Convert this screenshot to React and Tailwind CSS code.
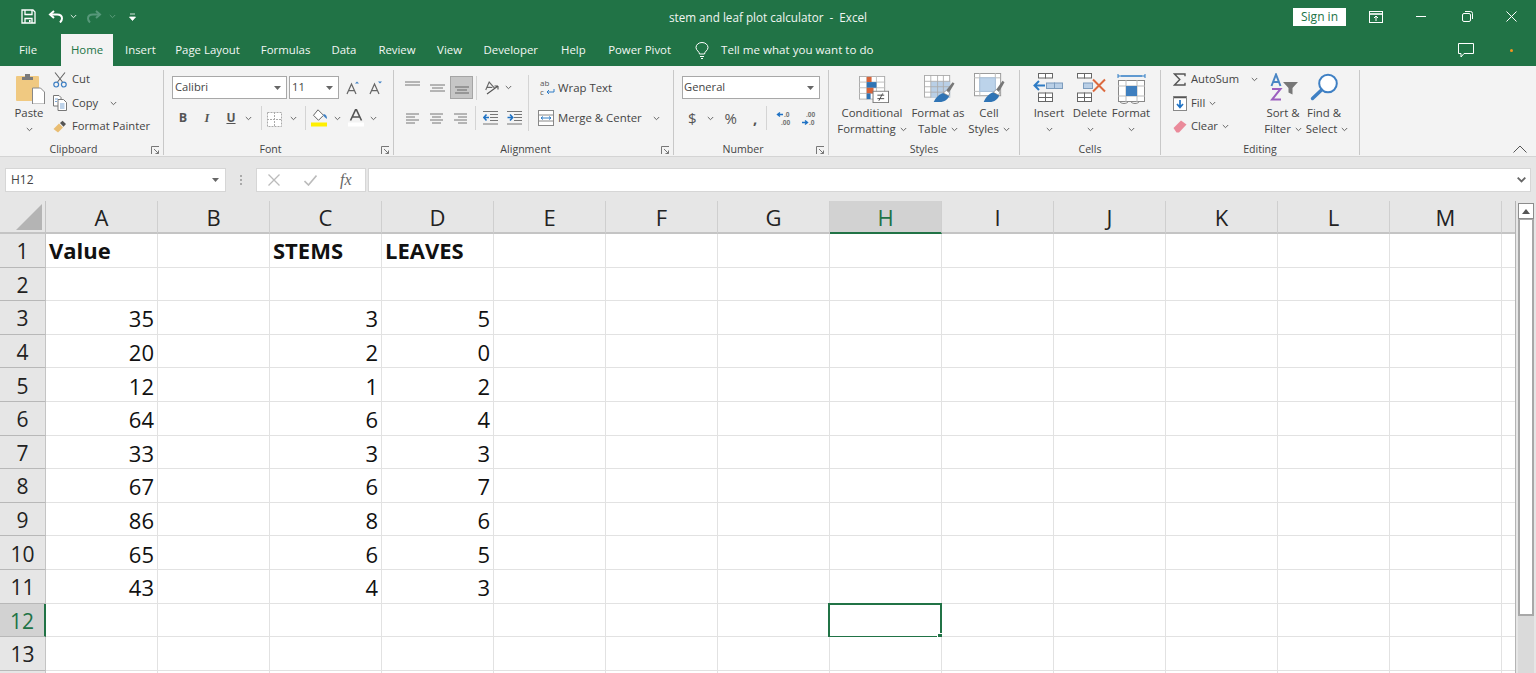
import React from 'react';

const UI = { fontFamily: '"Open Sans", sans-serif' };

const Chev = ({ c = '#666', className = '' }) => (
  <svg width="7" height="5" viewBox="0 0 7 5" className={`shrink-0 ${className}`}>
    <path d="M0.8 1 L3.5 3.7 L6.2 1" fill="none" stroke={c} strokeWidth="1" />
  </svg>
);
const Caret = () => (
  <svg width="7" height="4" viewBox="0 0 7 4" className="shrink-0"><path d="M0 0 H7 L3.5 4 Z" fill="#666" /></svg>
);
const Launcher = () => (
  <svg width="9" height="9" viewBox="0 0 9 9">
    <path d="M0.5 8 V0.5 H8" fill="none" stroke="#777" />
    <path d="M3 3 L7.5 7.5 M7.5 4.5 V7.5 H4.5" fill="none" stroke="#777" />
  </svg>
);
const VSep = ({ h = 'h-[24px]' }) => <div className={`w-px ${h} bg-[#d4d4d4] shrink-0`} />;

function Group({ w, label, launcher, children, border = true }) {
  return (
    <div style={{ width: w }} className={`shrink-0 h-[85px] flex flex-col ${border ? 'border-r border-[#c8c8c8]' : ''}`}>
      <div className="h-[72px] flex">{children}</div>
      <div className="grid grid-cols-[1fr_auto_1fr] items-center h-[13px] text-[10.6px] text-[#444]">
        <span />
        <span className={launcher ? 'mr-[16px]' : ''}>{label}</span>
        <span className="flex justify-end pr-[3px] pt-[1px]">{launcher && <Launcher />}</span>
      </div>
    </div>
  );
}

function BigBtn({ w, icon, lines, chev = 'own', ml = 0, shift = 0 }) {
  return (
    <div style={{ width: w, marginLeft: ml }} className="shrink-0 flex flex-col items-center text-[11.4px] leading-[16px] text-[#444]">
      <div className="h-[35px] flex items-start justify-center">{icon}</div>
      {lines.map((l, i) => {
        const last = i === lines.length - 1;
        return (
          <div key={i} style={last && shift ? { marginLeft: shift } : undefined} className="flex items-center gap-[4px] whitespace-nowrap h-[16px]">
            <span>{l}</span>
            {chev === 'inline' && last && <Chev />}
          </div>
        );
      })}
      {chev === 'own' && <div className="h-[16px] flex items-center"><Chev /></div>}
    </div>
  );
}

const SmallRow = ({ icon, text, gap = 6, iw = 19 }) => (
  <div className="h-[23.5px] flex items-center text-[11.2px] text-[#444] whitespace-nowrap">
    <span style={{ width: iw }} className="flex justify-center shrink-0">{icon}</span>
    <span style={{ marginLeft: gap }}>{text}</span>
  </div>
);

/* ---------- icons ---------- */
const SaveI = () => (
  <svg width="15" height="15" viewBox="0 0 15 15" fill="none" stroke="#fff" strokeWidth="1.3">
    <path d="M1 1 H12 L14 3 V14 H1 Z" />
    <path d="M4 1 V5.5 H11 V1" />
    <path d="M4 14 V9.5 H11 V14" />
    <rect x="8" y="11" width="1.6" height="2" fill="#fff" stroke="none" />
  </svg>
);
const UndoI = ({ c = '#fff' }) => (
  <svg width="15" height="13" viewBox="0 0 15 13" fill="none" stroke={c} strokeWidth="2">
    <path d="M6 1 L2 4.5 L6 8" />
    <path d="M2 4.5 H9 C12 4.5 14 6 14 8.5 C14 10.5 13 11.5 12 12.5" />
  </svg>
);
const ScissorsI = () => (
  <svg width="14" height="16" viewBox="0 0 14 16" fill="none">
    <path d="M2 0.5 L9.5 10 M12 0.5 L4.5 10" stroke="#666" strokeWidth="1.1" />
    <circle cx="3.2" cy="12.6" r="2.4" stroke="#3f80c4" strokeWidth="1.2" />
    <circle cx="10.8" cy="12.6" r="2.4" stroke="#3f80c4" strokeWidth="1.2" />
  </svg>
);
const CopyI = () => (
  <svg width="14" height="16" viewBox="0 0 14 16" fill="#fff" stroke="#777" strokeWidth="1">
    <path d="M0.5 0.5 H6 L8 2.5 V11 H0.5 Z" />
    <path d="M5 4.5 H10.5 L13.5 7.5 V15.5 H5 Z" />
    <path d="M2 4 H5 M2 6.5 H4 M7 9 H11.5 M7 11 H11.5 M7 13 H11.5" stroke="#5a8fc9" strokeWidth="0.8" />
  </svg>
);
const PainterI = () => (
  <svg width="14" height="13" viewBox="0 0 14 13">
    <path d="M0.5 9 L6 3.5 L10 7.5 L5 12.5 Z" fill="#e9bd72" />
    <path d="M7 3 L9.5 0.8 L13 4 L10.5 6.8 Z" fill="#555" />
  </svg>
);
const PasteI = () => (
  <svg width="29" height="31" viewBox="0 0 29 31">
    <rect x="0" y="3" width="23" height="25" rx="1" fill="#f0c981" />
    <path d="M6 4 H9 V1 H14 V4 H17 V7 H6 Z" fill="#7b7b7b" />
    <path d="M16.5 15 H24.5 L28.5 19 V31 H16.5 Z" fill="#fff" stroke="#888" />
  </svg>
);
const FontUp = ({ up }) => (
  <svg width="14" height="14" viewBox="0 0 14 14" fill="none">
    <path d="M1 13 L5.5 3 L10 13 M2.8 9.6 H8.2" stroke="#666" strokeWidth="1.2" />
    <path d={up ? 'M9 2.5 L11 0.5 L13 2.5 Z' : 'M9 0.5 H13 L11 2.5 Z'} fill="#3f80c4" />
  </svg>
);
const BorderI = () => (
  <svg width="15" height="15" viewBox="0 0 15 15" fill="#fff" stroke="#aaa">
    <rect x="0.5" y="0.5" width="14" height="14" strokeDasharray="2 1" />
    <path d="M7.5 0 V15 M0 7.5 H15" strokeDasharray="2 1" />
  </svg>
);
const FillI = () => (
  <svg width="17" height="18" viewBox="0 0 17 18">
    <path d="M7 0.8 L12.5 6.3 L7.5 11.3 L2.5 6.3 Z" fill="#fff" stroke="#666" />
    <path d="M12.5 5 C15 5.5 16 7 16 10 C14.5 9 13.5 8 12.5 7 Z" fill="#3f80c4" />
    <rect x="0" y="13.5" width="16" height="4" fill="#ffef00" />
  </svg>
);
const ColorA = () => (
  <svg width="16" height="18" viewBox="0 0 16 18">
    <path d="M2.5 11.5 L7.5 0.8 H8.5 L13.5 11.5 M4.5 8 H11.5" fill="none" stroke="#555" strokeWidth="1.6" />
    <rect x="0" y="13.5" width="16" height="4" fill="#fff" />
  </svg>
);
const Lines = ({ ys, xs, c = '#777' }) => (
  <svg width="16" height="15" viewBox="0 0 16 15" stroke={c} strokeWidth="1">
    {ys.map((y, i) => <line key={i} x1={xs[i][0]} x2={xs[i][1]} y1={y} y2={y} />)}
  </svg>
);
const OrientI = () => (
  <svg width="16" height="16" viewBox="0 0 16 16" fill="none">
    <path d="M1 9 L6 2 L10 9 M3 6.5 L8 8" stroke="#666" strokeWidth="1.1" transform="rotate(-12 6 6)" />
    <path d="M3 14 L14 6 M14 6 H10.5 M14 6 V9.5" stroke="#555" strokeWidth="1.1" />
  </svg>
);
const IndentI = ({ rev }) => (
  <svg width="15" height="14" viewBox="0 0 15 14" fill="none">
    <path d="M0 0.5 H15 M7 3.5 H15 M7 6.5 H15 M7 9.5 H15 M0 13 H15" stroke="#777" />
    <path d={rev ? 'M6 6.5 H1 M3.5 3.5 L0.8 6.5 L3.5 9.5' : 'M0.5 6.5 H5.5 M3 3.5 L5.7 6.5 L3 9.5'} stroke="#1f72c4" strokeWidth="1.6" />
  </svg>
);
const WrapI = () => (
  <svg width="15" height="17" viewBox="0 0 15 17" fill="none" className="overflow-visible">
    <text x="0" y="7" fontSize="8" fill="#555" fontFamily="Open Sans">ab</text>
    <text x="0" y="16" fontSize="8" fill="#555" fontFamily="Open Sans">c</text>
    <path d="M14 10 V13 H7 M9 11 L7 13 L9 15" stroke="#2f7cc5" strokeWidth="1" />
  </svg>
);
const MergeI = () => (
  <svg width="16" height="16" viewBox="0 0 16 16" fill="#fff" stroke="#888">
    <rect x="0.5" y="0.5" width="15" height="15" />
    <path d="M0 5 H16 M0 11 H16" />
    <path d="M3 8 H13 M5 6.5 L3 8 L5 9.5 M11 6.5 L13 8 L11 9.5" stroke="#2f7cc5" fill="none" />
  </svg>
);
const DecI = ({ inc }) => (
  <svg width="14" height="15" viewBox="0 0 14 15" className="overflow-visible">
    {inc ? (
      <>
        <text x="4" y="6" fontSize="6.5" fontWeight="700" fill="#777" fontFamily="Open Sans">.00</text>
        <text x="7" y="14" fontSize="6.5" fontWeight="700" fill="#777" fontFamily="Open Sans">.0</text>
        <path d="M0 11.5 H5 M3 9.5 L5.5 11.5 L3 13.5" stroke="#1f72c4" strokeWidth="1.4" fill="none" />
      </>
    ) : (
      <>
        <text x="7" y="6" fontSize="6.5" fontWeight="700" fill="#777" fontFamily="Open Sans">.0</text>
        <text x="4" y="14" fontSize="6.5" fontWeight="700" fill="#777" fontFamily="Open Sans">.00</text>
        <path d="M6 3.5 H1 M3 1.5 L0.5 3.5 L3 5.5" stroke="#1f72c4" strokeWidth="1.4" fill="none" />
      </>
    )}
  </svg>
);
const CondI = () => (
  <svg width="30" height="27" viewBox="0 0 31 31" preserveAspectRatio="none" className="mt-[6px] ml-[4px]">
    <rect x="0.5" y="0.5" width="26" height="26" fill="#fff" stroke="#aaa" />
    <path d="M0 7 H27 M0 13.5 H27 M0 20 H27 M8 0 V27 M18 0 V27" stroke="#bbb" />
    <rect x="8" y="1" width="5" height="6" fill="#d8643a" />
    <rect x="8" y="7" width="10" height="6.5" fill="#2f74b5" />
    <rect x="8" y="13.5" width="7" height="6.5" fill="#d8643a" />
    <rect x="8" y="20" width="4" height="6.5" fill="#2f74b5" />
    <rect x="14.5" y="17.5" width="16" height="13" fill="#fff" stroke="#777" />
    <path d="M19 22 H26 M19 26 H26 M24.5 20 L20.5 28.5" stroke="#444" />
  </svg>
);
const Brush = () => (
  <g>
    <path d="M23 17 L29.5 8 L31.5 9.5 L26 19 Z" fill="#777" />
    <path d="M10 30 C12 25 16 21 20 20 L26 23 C25 27 21 30 16 30 Z" fill="#2f74b5" />
    <path d="M20 20 L23 17 L26.5 20 L25.5 23 Z" fill="#fff" stroke="#777" strokeWidth="0.7" />
  </g>
);
const TableI = () => (
  <svg width="31" height="28" viewBox="0 0 32 31" preserveAspectRatio="none" className="mt-[5px] ml-[2px]">
    <rect x="0.5" y="0.5" width="26" height="24" fill="#fff" stroke="#aaa" />
    <rect x="7" y="7" width="20" height="18" fill="#b9cfe6" />
    <path d="M0 7 H27 M0 13 H27 M0 19 H27 M7 0 V25 M14 0 V25 M20 0 V25" stroke="#aaa" strokeWidth="0.9" />
    <Brush />
  </svg>
);
const CellI = () => (
  <svg width="31" height="30" viewBox="0 0 32 31" preserveAspectRatio="none" className="mt-[3px]">
    <rect x="0.5" y="0.5" width="27" height="23" fill="#fff" stroke="#999" />
    <path d="M0 5 H27 M0 19 H27 M6 0 V24 M22 0 V24" stroke="#bbb" />
    <rect x="6" y="5" width="16" height="14" fill="#bcd3ea" stroke="#a7c0da" />
    <Brush />
  </svg>
);
const InsertI = () => (
  <svg width="31" height="29" viewBox="0 0 31 29" fill="#fff" stroke="#666" className="mt-[3px] ml-[-1px]">
    <rect x="5.5" y="0.5" width="7" height="4.5" />
    <rect x="12.5" y="0.5" width="7" height="4.5" />
    <rect x="13.5" y="10" width="8" height="5.5" fill="#b9cfe6" stroke="#7c9cbd" />
    <rect x="21.5" y="10" width="8" height="5.5" fill="#b9cfe6" stroke="#7c9cbd" />
    <rect x="5.5" y="20" width="7" height="4.5" />
    <rect x="12.5" y="20" width="7" height="4.5" />
    <rect x="5.5" y="24.5" width="7" height="4" />
    <rect x="12.5" y="24.5" width="7" height="4" />
    <path d="M12 12.5 H1.5 M6 8 L1.5 12.5 L6 17" fill="none" stroke="#2f7cc5" strokeWidth="2" />
  </svg>
);
const DeleteI = () => (
  <svg width="30" height="29" viewBox="0 0 30 29" fill="#fff" stroke="#666" className="mt-[3px] ml-[3px]">
    <rect x="0.5" y="0.5" width="7" height="4.5" />
    <rect x="7.5" y="0.5" width="7" height="4.5" />
    <rect x="6.5" y="10" width="9" height="5.5" fill="#b9cfe6" stroke="#7c9cbd" />
    <rect x="0.5" y="20" width="7" height="4.5" />
    <rect x="7.5" y="20" width="7" height="4.5" />
    <rect x="0.5" y="24.5" width="7" height="4" />
    <rect x="7.5" y="24.5" width="7" height="4" />
    <path d="M16 6.5 L28 18.5 M28 6.5 L16 18.5" fill="none" stroke="#dc6a3f" strokeWidth="2" />
  </svg>
);
const FormatI = () => (
  <svg width="29" height="31" viewBox="0 0 29 31" fill="#fff" stroke="#888" className="mt-[3px]">
    <path d="M1 3 H28 M1 1 V5 M28 1 V5" stroke="#2f7cc5" />
    <path d="M4 3 H25" stroke="#2f7cc5" />
    <rect x="1.5" y="7.5" width="26" height="21" />
    <path d="M1 13 H28 M1 23 H28 M9 7 V29 M20 7 V29" stroke="#bbb" />
    <rect x="9" y="13" width="11" height="10" fill="#3f7fbf" stroke="none" />
    <path d="M3 29 C5 31 9 31 11 29 M14 29 C16 31 20 31 22 29" fill="none" stroke="#888" />
  </svg>
);
const SigmaI = () => (
  <svg width="13" height="13" viewBox="0 0 13 13" fill="none"><path d="M12 3.3 V1 H1.5 L6.8 6.5 L1.5 12 H12 V9.7" stroke="#555" strokeWidth="1.4" /></svg>
);
const FillDownI = () => (
  <svg width="14" height="15" viewBox="0 0 14 15">
    <rect x="0.5" y="0.5" width="13" height="14" fill="#fff" stroke="#888" />
    <path d="M1 1.5 H13" stroke="#555" strokeWidth="1.5" />
    <path d="M7 4 V11 M4 8 L7 11.5 L10 8" fill="none" stroke="#1f72c4" strokeWidth="1.7" />
  </svg>
);
const EraserI = () => (
  <svg width="14" height="13" viewBox="0 0 14 13"><path d="M0.5 8 L8 0.5 L13.5 4.5 L6 12.5 H3.5 Z" fill="#ea8a9a" /></svg>
);
const SortI = () => (
  <svg width="29" height="30" viewBox="0 0 29 30" fill="none" className="mt-[3px] ml-[2px]">
    <path d="M1.5 13 L6 1.5 L10.5 13 M3 9 H9" stroke="#4a86c5" strokeWidth="2" />
    <path d="M2 16 H10.5 L2 26.5 H11" stroke="#9d5fc0" strokeWidth="2" />
    <path d="M13 9 H28 L22.5 15 V21.5 L18.5 19.5 V15 Z" fill="#777" />
  </svg>
);
const FindI = () => (
  <svg width="29" height="28" viewBox="0 0 29 28" fill="none" className="mt-[3px]">
    <circle cx="18" cy="10.5" r="8.8" fill="#fff" stroke="#3f80c4" strokeWidth="2" />
    <path d="M11.5 17 L2.5 25.5" stroke="#3f80c4" strokeWidth="3.4" strokeLinecap="round" />
  </svg>
);

/* ---------- bars ---------- */
const UndoRedo = () => <span className="block -scale-x-100"><UndoI c="#57987a" /></span>;

function TitleBar() {
  return (
    <div className="h-[33px] flex items-center text-white relative">
      <div className="flex items-center">
        <span className="ml-[21px]"><SaveI /></span>
        <span className="ml-[12px]"><UndoI /></span>
        <Chev c="#dfeee5" className="ml-[7px]" />
        <span className="ml-[10px]"><UndoRedo /></span>
        <Chev c="#5d9c7b" className="ml-[7px]" />
        <svg width="7" height="8" viewBox="0 0 7 8" className="ml-[13px]"><path d="M1 1 H6 M0.5 4 H6.5 L3.5 7.5 Z" fill="#fff" stroke="#fff" strokeWidth="0.8" /></svg>
      </div>
      <div className="absolute left-0 right-0 top-[9px] text-center text-[11.7px] leading-[16px] text-[#f0f5f2] whitespace-pre">
        stem and leaf plot calculator  -  Excel
      </div>
      <div className="ml-auto flex items-center z-10">
        <div className="w-[53px] h-[18px] bg-white text-[#217346] text-[12px] flex items-center justify-center">Sign in</div>
        <svg width="14" height="12" viewBox="0 0 14 12" fill="none" stroke="#fff" className="ml-[23px]"><rect x="0.5" y="0.5" width="13" height="11" /><path d="M0.5 3 H13.5" strokeWidth="1.6" /><path d="M7 10 V5 M5 7 L7 5 L9 7" /></svg>
        <div className="w-[10px] h-px bg-white ml-[33px]" />
        <svg width="11" height="11" viewBox="0 0 11 11" fill="none" stroke="#fff" className="ml-[36px]"><rect x="0.5" y="2.5" width="8" height="8" rx="1.5" /><path d="M3 0.5 H8.5 A2 2 0 0 1 10.5 2.5 V8" /></svg>
        <svg width="11" height="11" viewBox="0 0 11 11" stroke="#fff" className="ml-[33px] mr-[19px]"><path d="M0.5 0.5 L10.5 10.5 M10.5 0.5 L0.5 10.5" /></svg>
      </div>
    </div>
  );
}

function TabBar() {
  const tabs = [['Insert', 12], ['Page Layout', 19.5], ['Formulas', 21], ['Data', 21], ['Review', 22], ['View', 21.5], ['Developer', 21.5], ['Help', 23], ['Power Pivot', 22.5]];
  return (
    <div className="h-[33px] flex items-end text-[11.4px] text-[#f2f7f4] whitespace-nowrap">
      <div className="ml-[19px] h-[32px] flex items-center w-[42px]">File</div>
      <div className="h-[32px] w-[52px] bg-[#f3f3f3] text-[#217346] flex items-center justify-center">Home</div>
      {tabs.map(([t, m]) => (
        <div key={t} style={{ marginLeft: m }} className="h-[32px] flex items-center">{t}</div>
      ))}
      <div className="h-[32px] flex items-center ml-[24px]">
        <svg width="14" height="17" viewBox="0 0 14 17" fill="none" stroke="#fff"><path d="M4.5 12 C4.5 9.5 1 8.5 1 5.5 A6 5 0 0 1 13 5.5 C13 8.5 9.5 9.5 9.5 12 Z" /><path d="M5 14.5 H9 M6 16.5 H8" /></svg>
      </div>
      <div className="h-[32px] flex items-center ml-[12px] text-[11.6px]">Tell me what you want to do</div>
      <div className="ml-auto h-[32px] flex items-center z-10">
        <svg width="16" height="15" viewBox="0 0 16 15" fill="none" stroke="#fff"><path d="M0.5 0.5 H15.5 V10.5 H6 L3 14 V10.5 H0.5 Z" /></svg>
        <div className="w-[3px] h-[3px] rounded-full bg-[#f7941d] ml-[36px] mr-[23px]" />
      </div>
    </div>
  );
}

function Ribbon() {
  return (
    <div className="h-[91px] bg-[#f3f3f3] border-b border-[#d4d4d4] flex pt-[4px] relative">
      <Group w={164} label="Clipboard" launcher>
        <BigBtn w={30} ml={14} icon={<span className="pl-[3px] block pt-[3px]"><PasteI /></span>} lines={['Paste']} />
        <div className="ml-[6px] -mt-[2px]">
          <SmallRow icon={<ScissorsI />} text="Cut" iw={20} gap={2} />
          <div className="h-[23.5px] flex items-center text-[11.2px] text-[#444]">
            <span className="w-[20px] flex justify-center"><CopyI /></span>
            <span className="ml-[2px]">Copy</span>
            <Chev className="ml-[12px]" />
          </div>
          <SmallRow icon={<PainterI />} text="Format Painter" iw={20} gap={2} />
        </div>
      </Group>
      <Group w={230} label="Font" launcher>
        <div className="pl-[8px] pt-[6px]">
          <div className="flex items-center h-[23px]">
            <div className="w-[115px] h-[23px] bg-white border border-[#a8a8a8] flex items-center justify-between pl-[2px] pr-[5px] text-[11.2px] text-[#444]">Calibri<Caret /></div>
            <div className="w-[50px] h-[23px] ml-[2px] bg-white border border-[#a8a8a8] flex items-center justify-between pl-[2px] pr-[5px] text-[11.2px] text-[#444]">11<Caret /></div>
            <span className="ml-[7px]"><FontUp up /></span>
            <span className="ml-[9px]"><FontUp /></span>
          </div>
          <div className="flex items-center h-[22px] mt-[8px] text-[#555]">
            <span className="ml-[6px] w-[10px] text-center font-bold text-[12.5px]">B</span>
            <span className="ml-[14px] w-[10px] text-center italic font-bold text-[12.5px]" style={{ fontFamily: '"Liberation Serif", serif' }}>I</span>
            <span className="ml-[14px] w-[10px] text-center font-bold text-[12px] underline">U</span>
            <Chev className="ml-[9px]" />
            <span className="ml-[9px]"><VSep /></span>
            <span className="ml-[5px] mt-[3px]"><BorderI /></span>
            <Chev className="ml-[8px]" />
            <span className="ml-[8px]"><VSep /></span>
            <span className="ml-[5px]"><FillI /></span>
            <Chev className="ml-[6px]" />
            <span className="ml-[7px]"><ColorA /></span>
            <Chev className="ml-[6px]" />
          </div>
        </div>
      </Group>
      <Group w={280} label="Alignment" launcher>
        <div className="pl-[11px] pt-[6px] flex">
          <div>
            <div className="flex items-center h-[23px]">
              <Lines ys={[2, 5]} xs={[[0, 15], [0, 15]]} />
              <span className="ml-[9px]"><Lines ys={[5, 8, 11]} xs={[[0, 15], [2, 13], [0, 15]]} /></span>
              <span className="ml-[4px] w-[23px] h-[23px] bg-[#c6c6c6] border border-[#a5a5a5] flex items-center justify-center"><Lines ys={[7, 10, 13]} xs={[[1, 15], [3, 13], [1, 15]]} c="#666" /></span>
              <span className="ml-[3px]"><VSep /></span>
              <span className="ml-[7px]"><OrientI /></span>
              <Chev className="ml-[5px]" />
            </div>
            <div className="flex items-center h-[22px] mt-[8px]">
              <span className="ml-[1px]"><Lines ys={[3, 6, 9, 12]} xs={[[0, 13], [0, 9], [0, 13], [0, 9]]} /></span>
              <span className="ml-[8px]"><Lines ys={[3, 6, 9, 12]} xs={[[0, 13], [2, 11], [0, 13], [2, 11]]} /></span>
              <span className="ml-[8px]"><Lines ys={[3, 6, 9, 12]} xs={[[0, 13], [4, 13], [0, 13], [4, 13]]} /></span>
              <span className="ml-[5px]"><VSep /></span>
              <span className="ml-[7px]"><IndentI rev /></span>
              <span className="ml-[9px]"><IndentI /></span>
            </div>
          </div>
          <div className="ml-[6px] mt-[-1px]"><VSep h="h-[56px]" /></div>
          <div className="ml-[9px] text-[11.4px] text-[#444]">
            <div className="flex items-center h-[23px] whitespace-nowrap"><span className="ml-[2px]"><WrapI /></span><span className="ml-[3px]">Wrap Text</span></div>
            <div className="flex items-center h-[22px] mt-[8px] whitespace-nowrap"><MergeI /><span className="ml-[4px]">Merge &amp; Center</span><Chev className="ml-[11px]" /></div>
          </div>
        </div>
      </Group>
      <Group w={155} label="Number" launcher>
        <div className="pl-[8px] pt-[6px]">
          <div className="w-[138px] h-[23px] bg-white border border-[#a8a8a8] flex items-center justify-between pl-[1px] pr-[5px] text-[11.2px] text-[#444]">General<Caret /></div>
          <div className="flex items-center h-[22px] mt-[8px] text-[#555]">
            <span className="ml-[6px] text-[15px]">$</span>
            <Chev className="ml-[10px]" />
            <span className="ml-[11px] text-[15px]">%</span>
            <span className="ml-[16px] text-[15px] font-bold leading-[14px]">,</span>
            <span className="ml-[9px]"><VSep /></span>
            <span className="ml-[10px]"><DecI /></span>
            <span className="ml-[11px]"><DecI inc /></span>
          </div>
        </div>
      </Group>
      <Group w={191} label="Styles">
        <BigBtn w={70} ml={8} icon={<CondI />} lines={['Conditional', 'Formatting']} chev="inline" />
        <BigBtn w={54} ml={4} icon={<TableI />} lines={['Format as', 'Table']} chev="inline" />
        <BigBtn w={44} ml={2} icon={<CellI />} lines={['Cell', 'Styles']} chev="inline" />
      </Group>
      <Group w={141} label="Cells">
        <BigBtn w={32} ml={13} icon={<InsertI />} lines={['Insert']} />
        <BigBtn w={36} ml={7} icon={<DeleteI />} lines={['Delete']} />
        <BigBtn w={38} ml={4} icon={<FormatI />} lines={['Format']} />
      </Group>
      <Group w={199} label="Editing">
        <div className="ml-[10px] -mt-[2px]">
          <div className="h-[23.5px] flex items-center text-[11.2px] text-[#444]"><span className="w-[17px] flex justify-center"><SigmaI /></span><span className="ml-[3px]">AutoSum</span><Chev className="ml-[12px]" /></div>
          <div className="h-[23.5px] flex items-center text-[11.2px] text-[#444]"><span className="w-[17px] flex justify-center"><FillDownI /></span><span className="ml-[3px]">Fill</span><Chev className="ml-[4px]" /></div>
          <div className="h-[23.5px] flex items-center text-[11.2px] text-[#444]"><span className="w-[17px] flex justify-center"><EraserI /></span><span className="ml-[3px]">Clear</span><Chev className="ml-[4px]" /></div>
        </div>
        <BigBtn w={36} ml={7} icon={<SortI />} lines={['Sort &', 'Filter']} chev="inline" />
        <BigBtn w={36} ml={5} icon={<FindI />} lines={['Find &', 'Select']} chev="inline" shift={6} />
      </Group>
      <svg width="14" height="8" viewBox="0 0 14 8" fill="none" stroke="#555" className="absolute right-[9px] bottom-[3px]"><path d="M0.5 7.5 L7 1 L13.5 7.5" /></svg>
    </div>
  );
}

function FormulaBar() {
  return (
    <div className="h-[44px] bg-[#e6e6e6] flex pt-[11px] pl-[5px] pr-[5px]">
      <div className="w-[221px] h-[24px] bg-white border border-[#d6d6d6] flex items-center justify-between pl-[5px] pr-[6px] text-[12px] text-[#444]">H12<Caret /></div>
      <div className="w-[30px] flex flex-col items-center justify-center gap-[2px] h-[24px]">
        <i className="block w-[2px] h-[2px] bg-[#aaa]" /><i className="block w-[2px] h-[2px] bg-[#aaa]" /><i className="block w-[2px] h-[2px] bg-[#aaa]" />
      </div>
      <div className="w-[110px] h-[24px] bg-white border border-[#d6d6d6] flex items-center pl-[11px]">
        <svg width="12" height="12" viewBox="0 0 12 12" stroke="#bbb" strokeWidth="1.3"><path d="M0.5 0.5 L11.5 11.5 M11.5 0.5 L0.5 11.5" /></svg>
        <svg width="13" height="11" viewBox="0 0 13 11" fill="none" stroke="#bbb" strokeWidth="1.6" className="ml-[24px]"><path d="M0.5 6 L4.5 10 L12.5 0.5" /></svg>
        <span className="ml-[23px] italic text-[16px] text-[#666] leading-[14px]" style={{ fontFamily: '"Liberation Serif", serif' }}>fx</span>
      </div>
      <div className="ml-[2px] flex-1 h-[24px] bg-white border border-[#d6d6d6] flex items-center justify-end pr-[4px]">
        <svg width="9" height="6" viewBox="0 0 9 6" fill="none" stroke="#666" strokeWidth="1.8"><path d="M0.7 0.7 L4.5 4.5 L8.3 0.7" /></svg>
      </div>
    </div>
  );
}

const DATA = {
  1: ['Value', '', 'STEMS', 'LEAVES'],
  3: [35, '', 3, 5], 4: [20, '', 2, 0], 5: [12, '', 1, 2], 6: [64, '', 6, 4], 7: [33, '', 3, 3],
  8: [67, '', 6, 7], 9: [86, '', 8, 6], 10: [65, '', 6, 5], 11: [43, '', 4, 3],
};
const COLS = 'ABCDEFGHIJKLM'.split('');
const ROWS = Array.from({ length: 14 }, (_, i) => i + 1);

function Sheet() {
  return (
    <div className="flex h-[472px] bg-[#e6e6e6]" style={UI}>
      <div className="w-[1516px] shrink-0 border-r border-[#b4b4b4] overflow-hidden">
        <div className="grid grid-cols-[46px_repeat(13,112px)_13px] grid-rows-[33px_repeat(14,33.6px)] text-[22px] leading-[30px]">
          <div className="bg-[#e6e6e6] border-r border-b-2 border-[#c4c4c4] flex items-center justify-end pr-[3px]">
            <svg width="26" height="26" viewBox="0 0 26 26"><path d="M26 0 V26 H0 Z" fill="#b4b4b4" /></svg>
          </div>
          {COLS.map(c => (
            <div key={c} className={`border-r border-[#cfcfcf] flex items-center justify-center pt-[1px] text-[22px] ${c === 'H' ? 'bg-[#d2d2d2] text-[#217346] border-b-2 border-b-[#217346]' : 'bg-[#e6e6e6] text-[#222] border-b-2 border-b-[#c4c4c4]'}`}>{c}</div>
          ))}
          <div className="bg-[#e6e6e6] border-b-2 border-[#c4c4c4]" />
          {ROWS.map(r => (
            <React.Fragment key={r}>
              <div className={`flex items-center justify-center pt-[2px] border-b border-[#b8b8b8] text-[21px] ${r === 12 ? 'bg-[#d2d2d2] text-[#217346] border-r-2 border-r-[#217346]' : 'bg-[#e6e6e6] text-[#222] border-r border-r-[#c4c4c4]'}`}>{r < 14 ? r : null}</div>
              {COLS.map((c, i) => {
                const v = DATA[r] ? DATA[r][i] : undefined;
                const isText = typeof v === 'string' && v;
                const selected = r === 12 && c === 'H';
                return (
                  <div key={c} className={`relative bg-white border-r border-b border-[#e2e2e2] flex items-center whitespace-nowrap text-[#111] ${isText ? 'justify-start pl-[3px] font-bold' : 'justify-end pr-[3px] pt-[2px]'}`}>
                    {v}
                    {selected && (
                      <div className="absolute left-[-2px] top-[-1px] right-[-1px] bottom-[-2px] border-2 border-[#217346]">
                        <div className="absolute right-[-4px] bottom-[-4px] w-[5px] h-[5px] bg-[#217346] border border-white box-content" />
                      </div>
                    )}
                  </div>
                );
              })}
              <div className="bg-white border-b border-[#e2e2e2]" />
            </React.Fragment>
          ))}
        </div>
      </div>
      <div className="flex-1 pl-[2px] pt-[2px] flex flex-col">
        <div className="w-[16px] h-[16px] shrink-0 bg-white border border-[#8c8c8c] flex items-center justify-center">
          <svg width="8" height="5" viewBox="0 0 8 5"><path d="M0 5 L4 0 L8 5 Z" fill="#555" /></svg>
        </div>
        <div className="w-[16px] flex-1 bg-[#dadada]">
          <div className="w-[16px] h-[397px] bg-white border-2 border-t border-[#a8a8a8]" />
        </div>
      </div>
    </div>
  );
}

export default function App() {
  return (
    <div className="w-[1536px] h-[673px] overflow-hidden bg-[#e6e6e6]" style={UI}>
      <div className="bg-[#217346]">
        <TitleBar />
        <TabBar />
      </div>
      <Ribbon />
      <FormulaBar />
      <Sheet />
    </div>
  );
}
